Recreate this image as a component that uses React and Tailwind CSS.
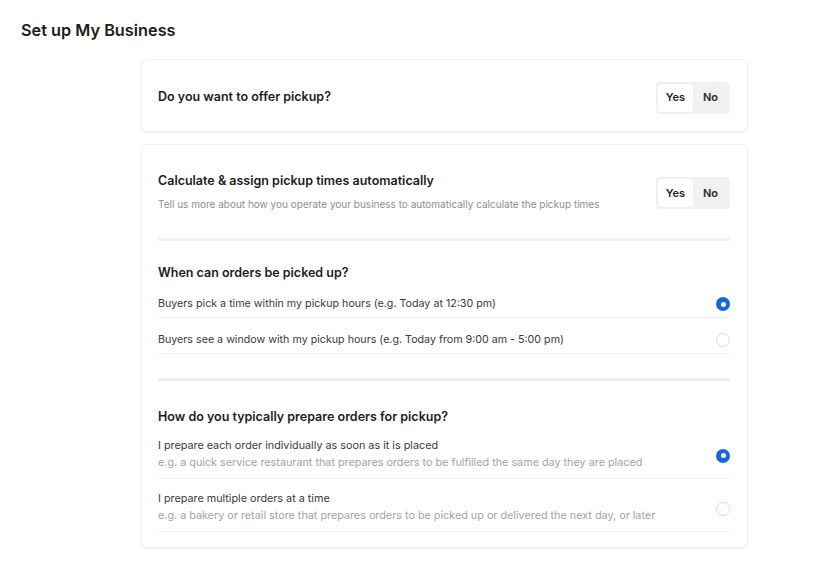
import React from "react";

const font = { fontFamily: "Inter, 'Noto Sans', sans-serif" };

function Toggle() {
  return (
    <div className="flex h-[32px] w-[74px] shrink-0 items-center rounded-[4px] bg-[#f1f1f1] p-[2px]">
      <div className="flex h-[28px] w-[35px] items-center justify-center rounded-[3px] bg-white text-[11px] font-semibold text-[#1f1f1f] shadow-[0_0_1px_rgba(0,0,0,0.08)]">
        Yes
      </div>
      <div className="flex h-[28px] flex-1 items-center justify-center text-[11px] font-semibold text-[#2a2a2a]">
        No
      </div>
    </div>
  );
}

function Radio({ on }) {
  if (on) {
    return (
      <div className="flex h-[14px] w-[14px] shrink-0 items-center justify-center rounded-full bg-[#1766dc]">
        <div className="h-[5px] w-[5px] rounded-full bg-white" />
      </div>
    );
  }
  return <div className="h-[14px] w-[14px] shrink-0 rounded-full border border-[#dcdcdc] bg-white" />;
}

function SimpleRow({ text, on }) {
  return (
    <div className="flex items-center justify-between border-b border-[#f0f0f0] pb-[4px] pt-[13px]">
      <span className="text-[10.7px] leading-[18px] text-[#3a3a3a]">{text}</span>
      <Radio on={on} />
    </div>
  );
}

function DescRow({ title, desc, on }) {
  return (
    <div className="flex items-center justify-between border-b border-[#f0f0f0] pb-[6px] pt-[12px]">
      <div>
        <div className="text-[10.8px] leading-[16px] text-[#3a3a3a]">{title}</div>
        <div className="text-[10.8px] leading-[18px] text-[#a3a3a3]">{desc}</div>
      </div>
      <div className="mt-[1px]">
        <Radio on={on} />
      </div>
    </div>
  );
}

export default function App() {
  return (
    <div className="min-h-[571px] w-[830px] bg-white pl-[21px] pt-[20px]" style={font}>
      <h1 className="text-[16.3px] font-semibold leading-[20px] text-[#1d1d1d]">Set up My Business</h1>

      <div className="ml-[120px] mt-[19px] flex w-[607px] flex-col gap-[12px]">
        <div className="flex h-[73px] items-center justify-between rounded-[6px] border border-[#f0f0f0] pl-[16px] pr-[17px] pt-[4px] shadow-[0_1px_2px_rgba(0,0,0,0.05)]">
          <span className="text-[12.5px] font-semibold text-[#1d1d1d]">Do you want to offer pickup?</span>
          <Toggle />
        </div>

        <div className="rounded-[6px] border border-[#f0f0f0] pb-[15px] pl-[16px] pr-[17px] pt-[26px] shadow-[0_1px_2px_rgba(0,0,0,0.05)]">
          <div className="flex items-center justify-between">
            <div>
              <div className="text-[12.5px] font-semibold leading-[20px] text-[#1d1d1d]">
                Calculate &amp; assign pickup times automatically
              </div>
              <div className="mt-[5px] text-[10px] leading-[16px] text-[#8e8e8e]">
                Tell us more about how you operate your business to automatically calculate the pickup times
              </div>
            </div>
            <div className="mt-[3px]">
              <Toggle />
            </div>
          </div>

          <div className="mt-[26px] h-[3px] rounded-full bg-[#f0f0f0]" />

          <div className="mt-[23px] text-[12.5px] font-semibold leading-[18px] text-[#1d1d1d]">
            When can orders be picked up?
          </div>
          <SimpleRow text="Buyers pick a time within my pickup hours (e.g. Today at 12:30 pm)" on />
          <SimpleRow text="Buyers see a window with my pickup hours (e.g. Today from 9:00 am - 5:00 pm)" />

          <div className="mt-[24px] h-[3px] rounded-full bg-[#f0f0f0]" />

          <div className="mt-[27px] text-[12.5px] font-semibold leading-[18px] text-[#1d1d1d]">
            How do you typically prepare orders for pickup?
          </div>
          <DescRow
            title="I prepare each order individually as soon as it is placed"
            desc="e.g. a quick service restaurant that prepares orders to be fulfilled the same day they are placed"
            on
          />
          <DescRow
            title="I prepare multiple orders at a time"
            desc="e.g. a bakery or retail store that prepares orders to be picked up or delivered the next day, or later"
          />
        </div>
      </div>
    </div>
  );
}
